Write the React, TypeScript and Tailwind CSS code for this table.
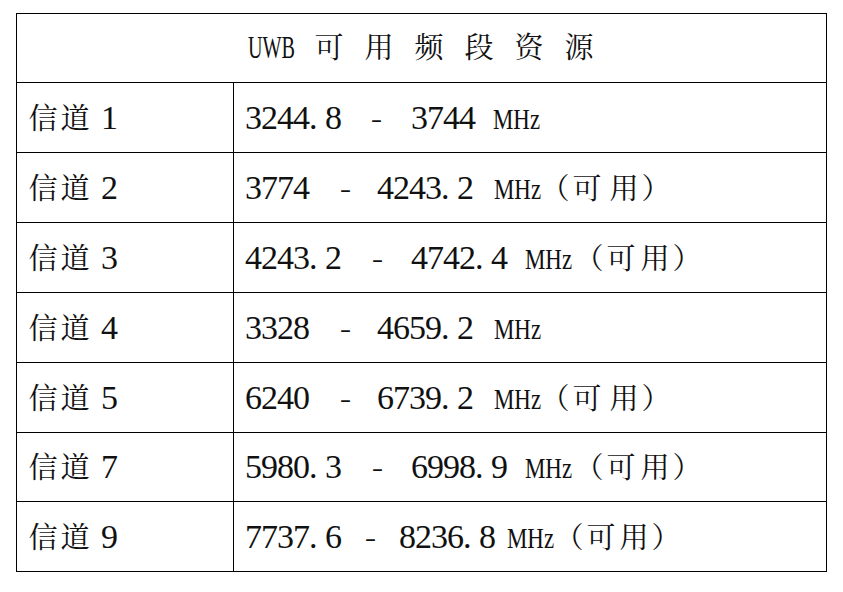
import React from "react";

const SERIF = "[font-family:'Liberation_Serif','Times_New_Roman',serif]";
const CJK = "[font-family:'Noto_Serif_CJK_SC','Noto_Sans_CJK_SC',sans-serif]";

type Row = {
  ch: string;
  h: string;
  n1: string;
  n1w: string;
  n2: string;
  n2c: string;
  mhzw: string;
  suffix: null | { yongMl: string };
};

const rows: Row[] = [
  { ch: "1", h: "h-[70px]", n1: "3244.8", n1w: "w-[115px]", n2: "3744", n2c: "w-[101px] pl-[19px]", mhzw: "w-[48px]", suffix: null },
  { ch: "2", h: "h-[70px]", n1: "3774", n1w: "w-[84px]", n2: "4243.2", n2c: "w-[133px] pl-[16px]", mhzw: "w-[45px]", suffix: { yongMl: "ml-[5px]" } },
  { ch: "3", h: "h-[70px]", n1: "4243.2", n1w: "w-[116px]", n2: "4742.4", n2c: "w-[132px] pl-[18px]", mhzw: "w-[48px]", suffix: { yongMl: "ml-[2px]" } },
  { ch: "4", h: "h-[70px]", n1: "3328", n1w: "w-[84px]", n2: "4659.2", n2c: "w-[133px] pl-[16px]", mhzw: "w-[45px]", suffix: null },
  { ch: "5", h: "h-[70px]", n1: "6240", n1w: "w-[84px]", n2: "6739.2", n2c: "w-[133px] pl-[16px]", mhzw: "w-[45px]", suffix: { yongMl: "ml-[5px]" } },
  { ch: "7", h: "h-[69px]", n1: "5980.3", n1w: "w-[116px]", n2: "6998.9", n2c: "w-[132px] pl-[18px]", mhzw: "w-[48px]", suffix: { yongMl: "ml-[2px]" } },
  { ch: "9", h: "h-[70px]", n1: "7737.6", n1w: "w-[109px]", n2: "8236.8", n2c: "w-[121px] pl-[13px]", mhzw: "w-[46px]", suffix: { yongMl: "ml-[1px]" } },
];

function Num({ s }: { s: string }) {
  return (
    <span className="inline-flex items-baseline">
      {s.split("").map((c, i) => (
        <span
          key={i}
          className={c === "." ? "inline-block w-4 text-left" : "inline-block w-4 text-center"}
        >
          {c}
        </span>
      ))}
    </span>
  );
}

function Han({ c, extra }: { c: string; extra?: string }) {
  return (
    <span className={`inline-block w-8 text-center text-[29px] leading-none ${CJK} ${extra ?? ""}`}>
      {c}
    </span>
  );
}

export default function App() {
  return (
    <div className="w-[843px] h-[592px] bg-white pt-[13px] pl-[16px] text-[#111] [font-family:'Liberation_Serif',serif]">
      <div className="w-[811px] border border-black flex flex-col">
        {/* header */}
        <div className="h-[68px] flex items-center justify-center">
          <div className="flex items-baseline">
            <span className="inline-block w-[48px]">
              <span className={`inline-block origin-left scale-x-[0.63] text-[32px] leading-none ${SERIF}`}>
                UWB
              </span>
            </span>
            <Han c="可" extra="ml-[17px]" />
            <Han c="用" extra="ml-[18px]" />
            <Han c="频" extra="ml-[18px]" />
            <Han c="段" extra="ml-[18px]" />
            <Han c="资" extra="ml-[18px]" />
            <Han c="源" extra="ml-[18px]" />
          </div>
        </div>

        {rows.map((r) => (
          <div key={r.ch} className={`flex border-t border-black ${r.h}`}>
            <div className="w-[216px] flex items-center pl-[10px]">
              <div className="flex items-baseline">
                <Han c="信" />
                <Han c="道" />
                <span className={`inline-block w-4 ml-[10px] text-center text-[34px] leading-none ${SERIF}`}>
                  {r.ch}
                </span>
              </div>
            </div>
            <div className="flex-1 border-l border-black flex items-center pl-[11px]">
              <div className={`flex items-baseline text-[34px] leading-none ${SERIF}`}>
                <span className={`inline-block ${r.n1w}`}>
                  <Num s={r.n1} />
                </span>
                <span className="inline-block w-8 text-center">
                  <span className="inline-block scale-x-50">–</span>
                </span>
                <span className={`inline-block ${r.n2c}`}>
                  <Num s={r.n2} />
                </span>
                <span className={`inline-block ${r.mhzw}`}>
                  <span className="inline-block origin-left scale-x-[0.79] text-[29px] leading-none">
                    MHz
                  </span>
                </span>
                {r.suffix && (
                  <>
                    <Han c="（" />
                    <Han c="可" />
                    <Han c="用" extra={r.suffix.yongMl} />
                    <Han c="）" />
                  </>
                )}
              </div>
            </div>
          </div>
        ))}
      </div>
    </div>
  );
}
